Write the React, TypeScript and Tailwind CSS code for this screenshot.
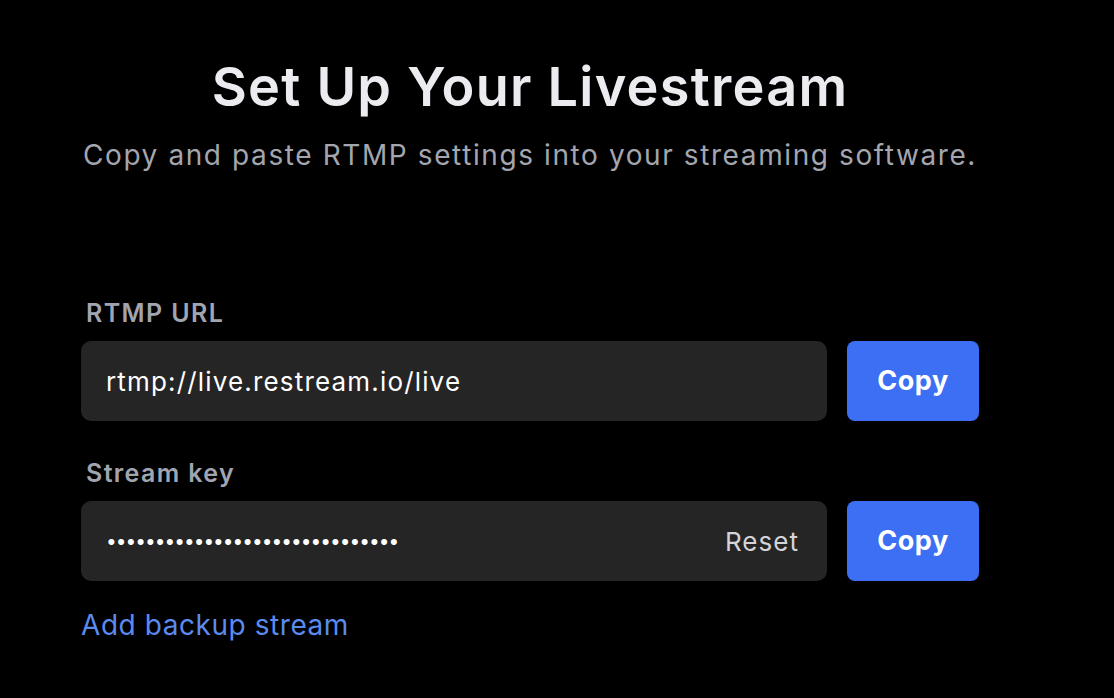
import { type FC } from "react";

const Field: FC<{ label: string; value: string; extra?: string; masked?: boolean }> = ({
  label,
  value,
  extra,
  masked,
}) => (
  <div className="flex flex-col">
    <div className="pl-[5px] text-[25px] font-semibold leading-none tracking-[0.055em] text-[#a1a5b0]">
      {label}
    </div>
    <div className="mt-[15px] flex items-stretch gap-5">
      <div className="flex h-[80px] flex-1 items-center justify-between rounded-[10px] bg-[#252525] pl-[25px] pr-[28px]">
        {masked ? (
          <span className="text-[19px] leading-none tracking-[-0.05em] text-white">{value}</span>
        ) : (
          <span className="text-[26px] tracking-[0.045em] text-white">{value}</span>
        )}
        {extra && <span className="text-[26px] tracking-[0.04em] text-[#d4d4d8]">{extra}</span>}
      </div>
      <button className="h-[80px] w-[132px] rounded-[8px] bg-[#3d6ff5] text-[27px] font-bold tracking-[0.02em] text-white">
        Copy
      </button>
    </div>
  </div>
);

export default function App() {
  return (
    <div className="min-h-screen w-full bg-black font-['Inter',sans-serif]">
      <div className="mx-auto flex w-[898px] -translate-x-[27px] flex-col pt-[60px]">
        <h1 className="text-center text-[54px] font-semibold leading-none tracking-[0.023em] text-[#ececf0]">
          Set Up Your Livestream
        </h1>
        <p className="mt-[27px] text-center text-[28px] leading-none tracking-[0.057em] text-[#a3a6ae]">
          Copy and paste RTMP settings into your streaming software.
        </p>

        <div className="mt-[132px] flex flex-col gap-[40px]">
          <Field label="RTMP URL" value="rtmp://live.restream.io/live" />
          <Field label="Stream key" value="••••••••••••••••••••••••••••••" extra="Reset" masked />
        </div>

        <a className="mt-[30px] text-[28px] leading-none tracking-[0.02em] text-[#5b8bef]">Add backup stream</a>
      </div>
    </div>
  );
}
